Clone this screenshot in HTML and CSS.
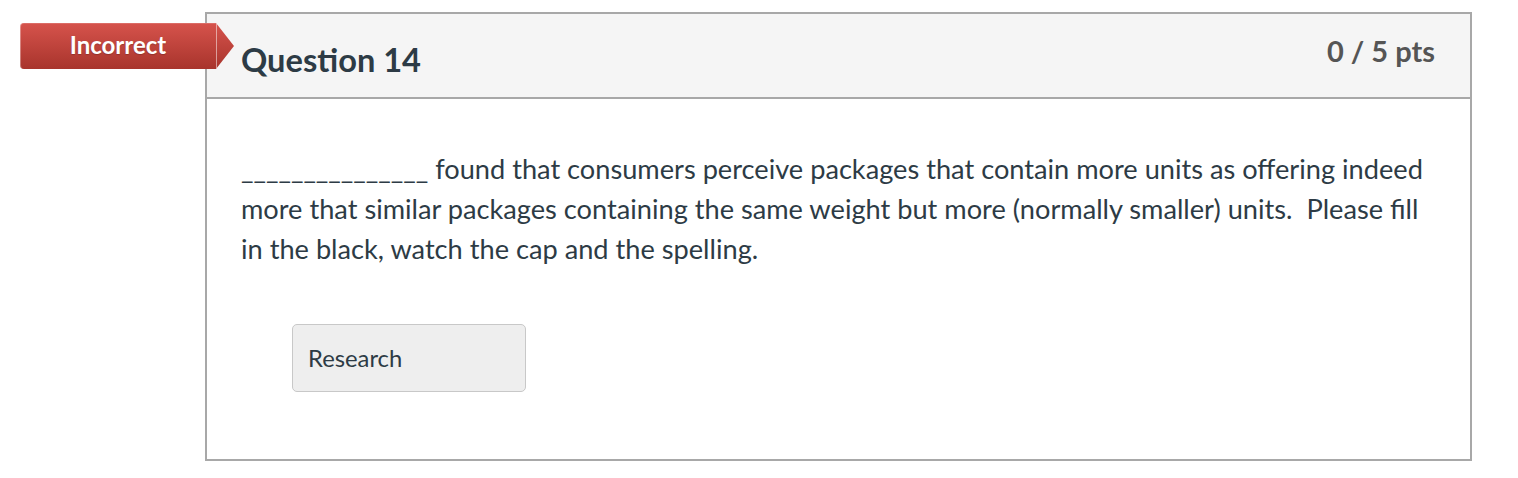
FILE: index.html
```html
<!DOCTYPE html>
<html lang="en">
<head>
<meta charset="utf-8">
<title>Question 14</title>
<link rel="stylesheet" href="styles.css">
</head>
<body>
<div class="page">
  <div class="question">
    <div class="flag"><span class="flag-text">Incorrect</span></div>
    <div class="q-header">
      <h2 class="q-title">Question 14</h2>
      <span class="q-pts">0 / 5 pts</span>
    </div>
    <div class="q-body">
      <p class="q-text">_______________ found that consumers perceive packages that contain more units as offering indeed more that similar packages containing the same weight but more (normally smaller) units.&nbsp; Please fill in the black, watch the cap and the spelling.</p>
      <div class="answer">Research</div>
    </div>
  </div>
</div>
</body>
</html>
```

FILE: styles.css
```css
html, body {
  margin: 0;
  padding: 0;
  background: #ffffff;
}

body {
  font-family: Lato, "Open Sans", "Liberation Sans", sans-serif;
  color: #2d3b45;
}

.page {
  padding: 12px 0 0 205px;
}

.question {
  position: relative;
  width: 1267px;
  height: 449px;
  box-sizing: border-box;
  border: 2px solid #a8a8a8;
  background: #ffffff;
}

.flag {
  position: absolute;
  left: -187px;
  top: 9px;
  width: 196px;
  height: 46px;
  box-sizing: border-box;
  border-radius: 4px 0 0 4px;
  background: linear-gradient(#d6534c, #a8342c);
  box-shadow: inset 4px 0 0 -3px rgba(255,255,255,0.35), inset 0 1px 0 rgba(255,255,255,0.15);
  display: flex;
  align-items: center;
  justify-content: center;
  padding-bottom: 3px;
}

.flag::after {
  content: "";
  position: absolute;
  left: 196px;
  top: 0;
  width: 18px;
  height: 46px;
  background: linear-gradient(#d6534c, #a8342c);
  clip-path: polygon(0 0, 100% 50%, 0 100%);
  border-left: 1px solid rgba(255,255,255,0.5);
  box-sizing: border-box;
}

.flag-text {
  color: #ffffff;
  font-weight: 700;
  font-size: 24px;
  line-height: 28px;
  text-shadow: 0 1px 1px rgba(0,0,0,0.2);
}

.q-header {
  height: 85px;
  box-sizing: border-box;
  background: #f5f5f5;
  border-bottom: 2px solid #a8a8a8;
  display: flex;
  justify-content: space-between;
  align-items: flex-start;
  padding: 0 35px 0 34px;
}

.q-title {
  margin: 28px 0 0 0;
  font-size: 32.6px;
  line-height: 36px;
  font-weight: 700;
  color: #2d3b45;
}

.q-pts {
  margin-top: 19px;
  font-size: 29px;
  line-height: 36px;
  font-weight: 700;
  color: #555555;
}

.q-body {
  padding: 50px 34px 0 34px;
}

.q-text {
  margin: 0;
  font-size: 27.2px;
  line-height: 40px;
  color: #2d3b45;
}

.answer {
  margin: 55px 0 0 51px;
  width: 234px;
  height: 68px;
  box-sizing: border-box;
  background: #eeeeee;
  border: 1px solid #c8c8c8;
  border-radius: 5px;
  display: flex;
  align-items: center;
  padding-left: 15px;
  font-size: 23.8px;
  color: #2d3b45;
}
```
